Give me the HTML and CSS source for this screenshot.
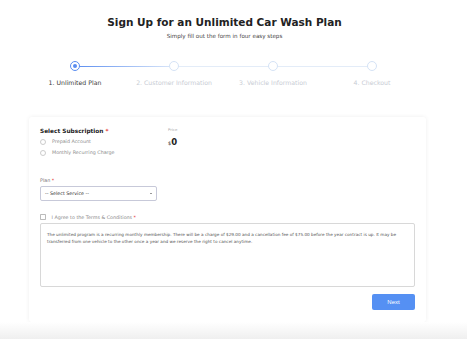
FILE: index.html
```html
<!DOCTYPE html>
<html>
<head>
<meta charset="utf-8">
<link rel="stylesheet" href="styles.css">
</head>
<body>
<div class="page">
  <header class="header">
    <h1 class="title">Sign Up for an Unlimited Car Wash Plan</h1>
    <p class="subtitle">Simply fill out the form in four easy steps</p>
  </header>

  <div class="stepper">
    <div class="step active">
      <div class="track"><span class="dot"></span></div>
      <div class="step-label">1. Unlimited Plan</div>
    </div>
    <div class="step">
      <div class="track"><span class="dot"></span></div>
      <div class="step-label">2. Customer Information</div>
    </div>
    <div class="step">
      <div class="track"><span class="dot"></span></div>
      <div class="step-label">3. Vehicle Information</div>
    </div>
    <div class="step last">
      <div class="track"><span class="dot"></span></div>
      <div class="step-label">4. Checkout</div>
    </div>
  </div>

  <div class="card">
    <div class="top-row">
      <div class="sub-col">
        <div class="field-title">Select Subscription <span class="req">*</span></div>
        <label class="option"><span class="radio"></span>Prepaid Account</label>
        <label class="option"><span class="radio"></span>Monthly Recurring Charge</label>
      </div>
      <div class="price-col">
        <div class="price-label">Price</div>
        <div class="price"><span class="cur">$</span>0</div>
      </div>
    </div>

    <div class="plan">
      <div class="plan-label">Plan <span class="req">*</span></div>
      <div class="select">
        <span>-- Select Service --</span>
        <span class="caret"></span>
      </div>
    </div>

    <label class="agree"><span class="checkbox"></span>I Agree to the Terms &amp; Conditions <span class="req">*</span></label>

    <div class="terms">The unlimited program is a recurring monthly membership. There will be a charge of $29.00 and a cancellation fee of $75.00 before the year contract is up. It may be transferred from one vehicle to the other once a year and we reserve the right to cancel anytime.</div>

    <div class="actions">
      <button class="next">Next</button>
    </div>
  </div>
</div>
<div class="footer-shade"></div>
</body>
</html>
```

FILE: styles.css
```css
html, body {
  margin: 0;
  padding: 0;
  background: #ffffff;
}
body {
  font-family: "DejaVu Sans", "Open Sans", sans-serif;
  color: #2b2b2b;
  width: 467px;
  height: 339px;
  overflow: hidden;
  position: relative;
}
.page {
  width: 397px;
  margin-left: 29px;
}
.header {
  text-align: center;
  padding-top: 14px;
  margin-left: -6px;
}
.title {
  margin: 0;
  font-size: 10.5px;
  font-weight: bold;
  color: #222;
  line-height: 16px;
}
.subtitle {
  margin: 2px 0 0;
  font-size: 5.6px;
  color: #444;
  line-height: 8px;
}

.stepper {
  display: flex;
  margin-top: 20px;
  margin-left: -3.5px;
}
.step {
  width: 99px;
  display: flex;
  flex-direction: column;
  align-items: center;
}
.track {
  width: 100%;
  height: 12px;
  position: relative;
  display: flex;
  justify-content: center;
  align-items: center;
}
.track::after {
  content: "";
  position: absolute;
  left: 50%;
  width: 100%;
  top: 5.5px;
  height: 1px;
  background: #e3ecf8;
}
.step.active .track::after {
  background: linear-gradient(to right, #5a8df0, #dbe7f9);
}
.step.last .track::after {
  display: none;
}
.dot {
  width: 10px;
  height: 10px;
  border-radius: 50%;
  border: 1px solid #d5e3f6;
  background: #fff;
  position: relative;
  z-index: 1;
  box-sizing: border-box;
}
.step.active .dot {
  border: 1.5px solid #5a8df0;
}
.step.active .dot::after {
  content: "";
  position: absolute;
  left: 1.5px;
  top: 1.5px;
  width: 4px;
  height: 4px;
  border-radius: 50%;
  background: #5a8df0;
}
.step-label {
  margin-top: 7px;
  font-size: 6.2px;
  color: #c8ccd4;
  white-space: nowrap;
}
.step.active .step-label {
  color: #3a3a3a;
}

.card {
  margin-top: 31px;
  background: #fff;
  border-radius: 3px;
  box-shadow: 0 0 4px rgba(0,0,0,0.07);
  padding: 10px 11px 11px;
  height: 205px;
  box-sizing: border-box;
}
.top-row {
  display: flex;
}
.sub-col {
  width: 128px;
}
.field-title {
  font-size: 5.8px;
  font-weight: bold;
  color: #222;
  line-height: 8px;
  margin-bottom: 1px;
}
.req {
  color: #e53935;
}
.option {
  display: flex;
  align-items: center;
  font-size: 4.8px;
  color: #8a8a8a;
  height: 11px;
}
.radio {
  width: 4px;
  height: 4px;
  border: 0.6px solid #ccc;
  border-radius: 50%;
  margin-right: 6px;
}
.price-label {
  font-size: 3.8px;
  color: #aaa;
  line-height: 6px;
}
.price {
  font-size: 8.5px;
  font-weight: bold;
  color: #222;
  line-height: 12px;
  margin-top: 3px;
}
.price .cur {
  font-size: 5px;
  font-weight: normal;
}

.plan {
  margin-top: 19px;
}
.plan-label {
  font-size: 4.8px;
  color: #777;
  line-height: 7px;
}
.select {
  margin-top: 2px;
  width: 117px;
  height: 15px;
  box-sizing: border-box;
  border: 1px solid #c7c9d9;
  border-radius: 2px;
  display: flex;
  align-items: center;
  justify-content: space-between;
  padding: 0 4px;
  font-size: 4.8px;
  color: #333;
}
.caret {
  width: 0;
  height: 0;
  border-left: 1.2px solid transparent;
  border-right: 1.2px solid transparent;
  border-top: 1.5px solid #333;
}

.agree {
  display: flex;
  align-items: center;
  margin-top: 12px;
  font-size: 4.8px;
  color: #888;
  height: 8px;
}
.agree .req {
  margin-left: 1.5px;
}
.checkbox {
  width: 3.5px;
  height: 3.5px;
  border: 0.6px solid #bbb;
  border-radius: 0.8px;
  margin-right: 6px;
}
.terms {
  margin-top: 2px;
  height: 64px;
  box-sizing: border-box;
  border: 1px solid #d8d8d8;
  border-radius: 2px;
  padding: 8px 6px;
  font-size: 4.2px;
  line-height: 6.5px;
  color: #555;
}
.actions {
  display: flex;
  justify-content: flex-end;
  margin-top: 7px;
}
.next {
  width: 43px;
  height: 16px;
  background: #5590f3;
  color: #fff;
  border: none;
  border-radius: 2px;
  font-family: "Liberation Sans", sans-serif;
  font-size: 6px;
  padding: 0;
}
.footer-shade {
  position: absolute;
  left: 0;
  right: 0;
  bottom: 0;
  height: 17px;
  background: linear-gradient(to bottom, #ffffff, #efefef);
}
```
